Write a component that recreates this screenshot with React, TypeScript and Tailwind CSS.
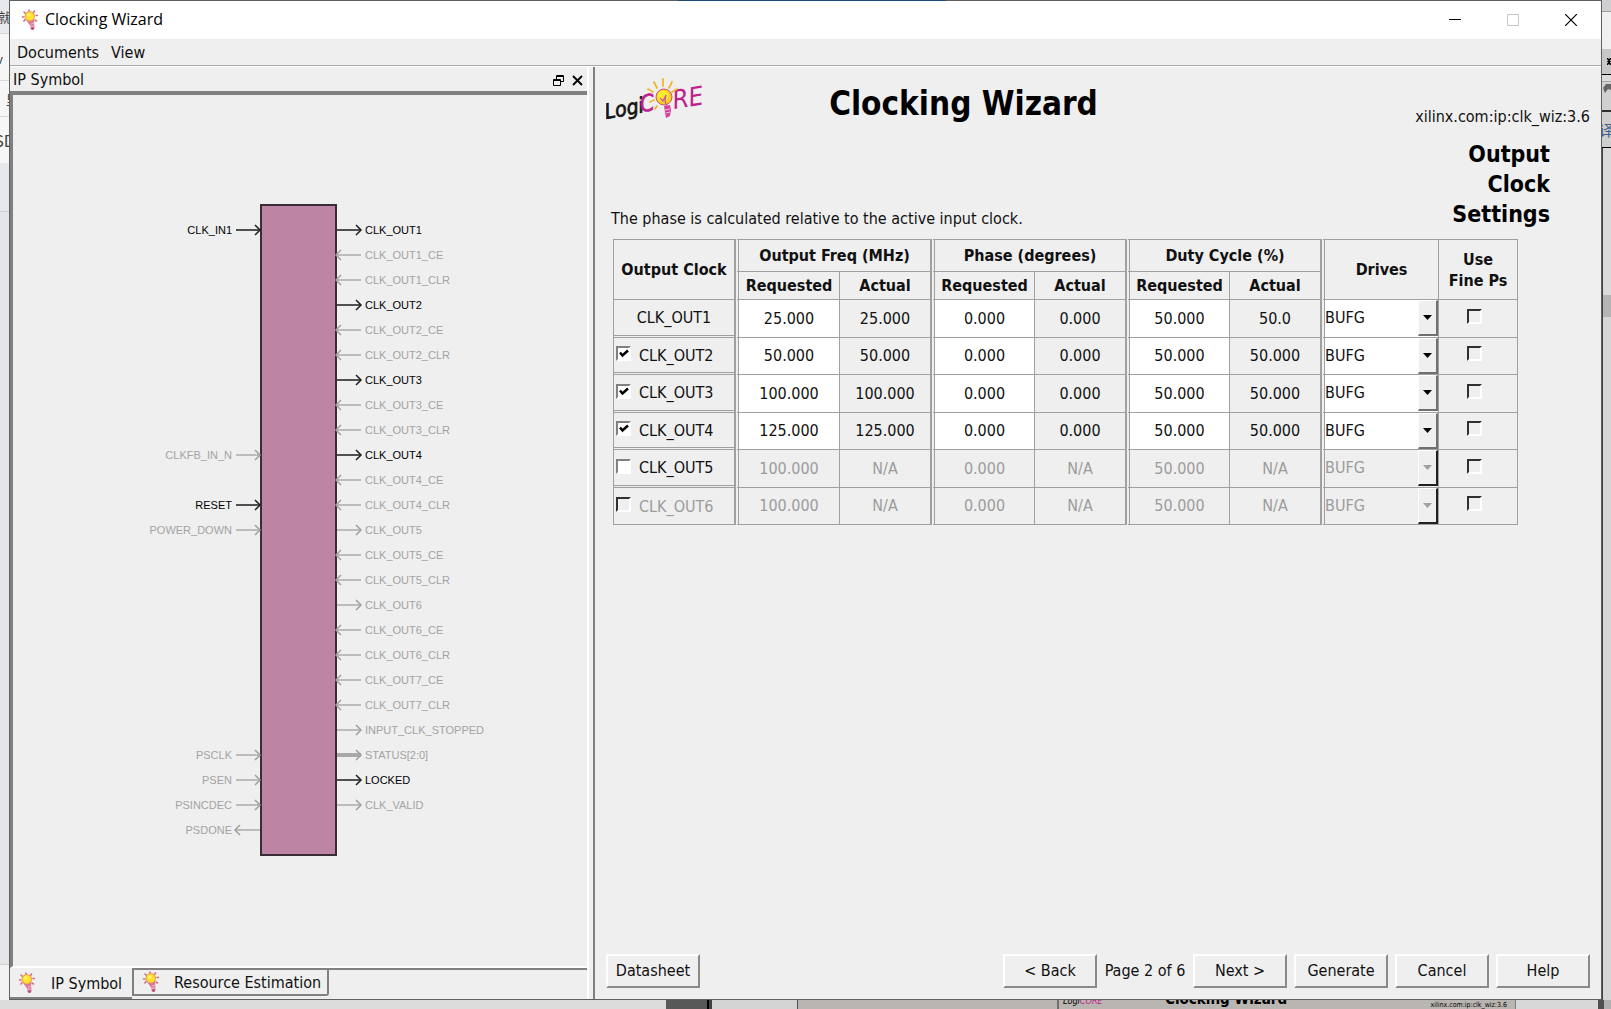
import { useState } from "react";
import clsx from "clsx";

interface ClockRow {
  name: string;
  state: "fixed" | "on" | "off" | "locked";
  freq: string;
  actualFreq: string;
  phase: string;
  actualPhase: string;
  duty: string;
  actualDuty: string;
}

const CLOCKS: ClockRow[] = [
  { name: "CLK_OUT1", state: "fixed", freq: "25.000", actualFreq: "25.000", phase: "0.000", actualPhase: "0.000", duty: "50.000", actualDuty: "50.0" },
  { name: "CLK_OUT2", state: "on", freq: "50.000", actualFreq: "50.000", phase: "0.000", actualPhase: "0.000", duty: "50.000", actualDuty: "50.000" },
  { name: "CLK_OUT3", state: "on", freq: "100.000", actualFreq: "100.000", phase: "0.000", actualPhase: "0.000", duty: "50.000", actualDuty: "50.000" },
  { name: "CLK_OUT4", state: "on", freq: "125.000", actualFreq: "125.000", phase: "0.000", actualPhase: "0.000", duty: "50.000", actualDuty: "50.000" },
  { name: "CLK_OUT5", state: "off", freq: "100.000", actualFreq: "N/A", phase: "0.000", actualPhase: "N/A", duty: "50.000", actualDuty: "N/A" },
  { name: "CLK_OUT6", state: "locked", freq: "100.000", actualFreq: "N/A", phase: "0.000", actualPhase: "N/A", duty: "50.000", actualDuty: "N/A" },
];

interface Port {
  name: string;
  row: number;
  dir: "in" | "out";
  active?: boolean;
  bus?: boolean;
}

const LEFT_PORTS: Port[] = [
  { name: "CLK_IN1", row: 0, dir: "in", active: true },
  { name: "CLKFB_IN_N", row: 9, dir: "in" },
  { name: "RESET", row: 11, dir: "in", active: true },
  { name: "POWER_DOWN", row: 12, dir: "in" },
  { name: "PSCLK", row: 21, dir: "in" },
  { name: "PSEN", row: 22, dir: "in" },
  { name: "PSINCDEC", row: 23, dir: "in" },
  { name: "PSDONE", row: 24, dir: "out" },
];

const RIGHT_PORTS: Port[] = [
  { name: "CLK_OUT1", row: 0, dir: "out", active: true },
  { name: "CLK_OUT1_CE", row: 1, dir: "in" },
  { name: "CLK_OUT1_CLR", row: 2, dir: "in" },
  { name: "CLK_OUT2", row: 3, dir: "out", active: true },
  { name: "CLK_OUT2_CE", row: 4, dir: "in" },
  { name: "CLK_OUT2_CLR", row: 5, dir: "in" },
  { name: "CLK_OUT3", row: 6, dir: "out", active: true },
  { name: "CLK_OUT3_CE", row: 7, dir: "in" },
  { name: "CLK_OUT3_CLR", row: 8, dir: "in" },
  { name: "CLK_OUT4", row: 9, dir: "out", active: true },
  { name: "CLK_OUT4_CE", row: 10, dir: "in" },
  { name: "CLK_OUT4_CLR", row: 11, dir: "in" },
  { name: "CLK_OUT5", row: 12, dir: "out" },
  { name: "CLK_OUT5_CE", row: 13, dir: "in" },
  { name: "CLK_OUT5_CLR", row: 14, dir: "in" },
  { name: "CLK_OUT6", row: 15, dir: "out" },
  { name: "CLK_OUT6_CE", row: 16, dir: "in" },
  { name: "CLK_OUT6_CLR", row: 17, dir: "in" },
  { name: "CLK_OUT7_CE", row: 18, dir: "in" },
  { name: "CLK_OUT7_CLR", row: 19, dir: "in" },
  { name: "INPUT_CLK_STOPPED", row: 20, dir: "out" },
  { name: "STATUS[2:0]", row: 21, dir: "out", bus: true },
  { name: "LOCKED", row: 22, dir: "out", active: true },
  { name: "CLK_VALID", row: 23, dir: "out" },
];

function BulbIcon() {
  return (
    <svg width="18" height="22" viewBox="0 0 18 22" className="shrink-0" aria-hidden="true">
      <g stroke="#d0708c" strokeWidth="1.6" strokeLinecap="round">
        <path d="M3 3l1.500 1.500M8 1v1.500M13.500 2l-1 1.500M1.500 8h1.500M15 6.500h1.500M3 12l1-1.500M14 11l1.500 1" />
      </g>
      <path d="M5 11L9.500 17 9.500 20 12.500 21 13.500 19 13 10z" fill="#d9799a" />
      <circle cx="8.800" cy="7.300" r="5.200" fill="#e8975a" />
      <circle cx="8.800" cy="7.200" r="4.300" fill="#ffe02e" />
      <circle cx="7.800" cy="6" r="1.800" fill="#fff36a" />
      <path d="M9.800 15.200l3.200-1M10 17.500l3.200-.8" stroke="#f0c0cf" strokeWidth="1" />
      <path d="M10 18.500l.3 2 1.700.5 1.300-2.500z" fill="#b5487f" />
    </svg>
  );
}

function LogiCoreLogo() {
  return (
    <svg width="102" height="46" viewBox="0 0 102 46" role="img" aria-label="LogiCORE" className="shrink-0">
      <g fontStyle="italic">
        <text x="0" y="42" fontSize="21" fill="#141414" stroke="#141414" strokeWidth=".7" transform="rotate(-10 0 42)" fontFamily="'DejaVu Sans Condensed', sans-serif">Logi</text>
        <text x="35" y="35" fontSize="23" fill="#c0208c" stroke="#c0208c" strokeWidth=".6" transform="rotate(-8 35 35)" fontFamily="'DejaVu Sans Condensed', sans-serif">C</text>
        <text x="68" y="32" fontSize="26" fill="#c0208c" transform="rotate(-9 68 32)" fontFamily="'DejaVu Sans Condensed', sans-serif">RE</text>
      </g>
      <g stroke="#f2b62e" strokeWidth="1.800" strokeLinecap="round">
        <path d="M57 2v7M48 5l3 6M66 5l-3 6M42 12l5 3M71 12l-5 3M44 25l4-2M49 32l2-3" />
      </g>
      <circle cx="58" cy="20" r="8" fill="#f7cf1d" stroke="#d0508c" strokeWidth="1" />
      <circle cx="57" cy="19" r="5.500" fill="#ffee30" />
      <path d="M54 21l3 3 3-6-1 6 2 6" fill="none" stroke="#d4569a" strokeWidth="1.300" />
      <path d="M58 29l6-1 1 5-1 6-4 2-1-6z" fill="#d4429a" />
      <path d="M59 33l5-1M60 36l4-1" stroke="#f0c3de" strokeWidth="1" />
    </svg>
  );
}

function PortArrow({ port, side }: { port: Port; side: "left" | "right" }) {
  const y = 26 + port.row * 25;
  const [x1, x2] = side === "left" ? [137, 161] : [238, 262];
  // "in" on the left and "out" on the right both point right
  const pointsRight = (side === "left") === (port.dir === "in");
  const tip = pointsRight ? x2 : side === "left" ? 136 : 237;
  const back = pointsRight ? tip - 5 : tip + 5;
  return (
    <g>
      <line x1={x1} x2={x2} y1={y} y2={y} stroke={port.active ? "#505050" : port.bus ? "#a8a8a8" : "#bcbcbc"} strokeWidth={port.bus ? 4 : 2} />
      <path d={`M${back} ${y - 5}L${tip} ${y}L${back} ${y + 5}`} fill="none" stroke={port.active ? "#202020" : "#a0a0a0"} strokeWidth="1.500" />
      <text x={side === "left" ? 133 : 266} y={y + 4} textAnchor={side === "left" ? "end" : "start"} fill={port.active ? "#000000" : "#a3a3a3"}>
        {port.name}
      </text>
    </g>
  );
}

function IpSymbol() {
  return (
    <svg width="400" height="652" viewBox="0 0 400 652" className="font-['Liberation_Sans',sans-serif] text-[11px]">
      <rect x="162" y="1" width="75" height="650" fill="#bd85a3" stroke="#3a2c34" strokeWidth="2" />
      {LEFT_PORTS.map((p) => <PortArrow key={p.name} port={p} side="left" />)}
      {RIGHT_PORTS.map((p) => <PortArrow key={p.name} port={p} side="right" />)}
    </svg>
  );
}

function DockPanel() {
  return (
    <section className="w-[579px] shrink-0 flex flex-col border-r-2 border-white mr-1">
      <div className="h-6 flex items-center justify-between pl-[3px] pr-1 pt-0.5">
        <h2>IP Symbol</h2>
        <div className="flex items-center gap-2">
          <button aria-label="Float" className="block">
            <svg width="11" height="11" viewBox="0 0 11 11" fill="none" stroke="#000">
              <path d="M3.500 4V.5h7v6H7.500M3.500 1.500h7" />
              <path d="M.5 4.500h7v6h-7zM.5 5.500h7" />
            </svg>
          </button>
          <button aria-label="Close panel" className="block">
            <svg width="11" height="11" viewBox="0 0 11 11" stroke="#000" strokeWidth="1.800"><path d="M1 1l9 9M10 1l-9 9" /></svg>
          </button>
        </div>
      </div>
      <div className="flex-1 min-h-0 flex items-center justify-center pr-0.5 pb-px border-t-4 border-l-[3px] border-t-[#808080] border-l-[#808080] border-b-2 border-b-white">
        <IpSymbol />
      </div>
      <div role="tablist" className="h-[31px] flex items-start">
        <button role="tab" aria-selected="true" className="w-[122px] h-[31px] flex items-center gap-[15px] pl-2 border-b-2 border-[#808080]">
          <BulbIcon />
          <span className="pt-0.5 whitespace-nowrap">IP Symbol</span>
        </button>
        <div className="flex-1 h-[31px] border-t-2 border-[#808080]">
          <button role="tab" aria-selected="false" className="w-[197px] h-[26px] flex items-center gap-3.5 pl-2 border-x-2 border-b-2 border-[#808080] rounded-br-[3px]">
            <BulbIcon />
            <span className="pt-0.5 whitespace-nowrap">Resource Estimation</span>
          </button>
        </div>
      </div>
    </section>
  );
}

function EnableBox({ row }: { row: ClockRow }) {
  const locked = row.state === "locked";
  return (
    <span className="grid mb-1">
      <input
        id={row.name}
        type="checkbox"
        defaultChecked={row.state === "on"}
        disabled={locked}
        className={clsx(
          "peer appearance-none col-start-1 row-start-1 w-[15px] h-[15px] border-2 border-r-white border-b-white",
          locked ? "border-t-[#303030] border-l-[#303030]" : "bg-white border-t-[#808080] border-l-[#808080]"
        )}
      />
      <svg width="15" height="15" viewBox="0 0 15 15" className="hidden peer-checked:block pointer-events-none col-start-1 row-start-1">
        <path d="M4 6.500l2.500 3L12 4.500" fill="none" stroke="#000" strokeWidth="2.500" />
      </svg>
    </span>
  );
}

const cell = "border-r border-b border-[#a0a0a0] bg-clip-padding p-0 text-center align-middle";
const valueCell = "border-r border-b border-[#a0a0a0] p-0 pt-px text-center align-middle";
const groupCell = "border-r border-b border-l-4 [border-left-style:double] border-[#a0a0a0] bg-clip-padding p-0 text-center align-middle";

function ValueInput({ label, value, off }: { label: string; value: string; off: boolean }) {
  return (
    <input
      type="text"
      aria-label={label}
      defaultValue={value}
      disabled={off}
      className={clsx("block w-full h-9 text-center outline-none", off ? "text-[#9c9c9c]" : "bg-white")}
    />
  );
}

function ClockTableRow({ row, last }: { row: ClockRow; last: boolean }) {
  const [drive, setDrive] = useState("BUFG");
  const off = row.state === "off" || row.state === "locked";
  const gray = off && "text-[#9c9c9c]";
  const editable = !off && "bg-white";
  return (
    <tr>
      <th scope="row" className={clsx("border-x border-[#a0a0a0] p-0 pt-0.5 font-normal", last ? "border-b" : "border-b-[3px] [border-bottom-style:double]")}>
        {row.state === "fixed" ? (
          row.name
        ) : (
          <div className="flex items-center gap-2 pl-0.5">
            <EnableBox row={row} />
            <label htmlFor={row.name} className={clsx(row.state === "locked" && "text-[#9c9c9c]")}>{row.name}</label>
          </div>
        )}
      </th>
      <td className={clsx(groupCell, editable)}><ValueInput label={`${row.name} requested frequency`} value={row.freq} off={off} /></td>
      <td className={clsx(valueCell, gray)}>{row.actualFreq}</td>
      <td className={clsx(groupCell, editable)}><ValueInput label={`${row.name} requested phase`} value={row.phase} off={off} /></td>
      <td className={clsx(valueCell, gray)}>{row.actualPhase}</td>
      <td className={clsx(groupCell, editable)}><ValueInput label={`${row.name} requested duty cycle`} value={row.duty} off={off} /></td>
      <td className={clsx(valueCell, gray)}>{row.actualDuty}</td>
      <td className={clsx(groupCell, editable)}>
        <div className="grid">
          <select
            aria-label={`${row.name} drives`}
            value={drive}
            onChange={(e) => setDrive(e.target.value)}
            disabled={off}
            className={clsx("appearance-none col-start-1 row-start-1 w-full h-9 outline-none opacity-100", off ? "text-[#9c9c9c]" : "bg-white")}
          >
            <option>BUFG</option>
            <option>BUFH</option>
          </select>
          <span
            className={clsx(
              "col-start-1 row-start-1 justify-self-end w-5 h-9 flex items-center justify-center pointer-events-none bg-[#efefef] border-t border-l border-t-white border-l-white border-r-2 border-b-2",
              off ? "border-r-[#202020] border-b-[#202020]" : "border-r-[#707070] border-b-[#707070]"
            )}
          >
            <svg width="9" height="5" viewBox="0 0 9 5"><path d="M0 0h9L4.500 5z" fill={off ? "#a0a0a0" : "#000"} /></svg>
          </span>
        </div>
      </td>
      <td className={cell}>
        <input
          type="checkbox"
          aria-label={`${row.name} use fine phase shift`}
          disabled
          className="appearance-none block ml-7 mb-1 w-[15px] h-[15px] border-2 border-t-[#303030] border-l-[#303030] border-r-white border-b-white"
        />
      </td>
    </tr>
  );
}

function ClockTable() {
  return (
    <table className="table-fixed w-[905px] h-[286px] border-separate border-spacing-0">
      <colgroup>
        <col className="w-[122px]" />
        <col className="w-[105px]" />
        <col className="w-[91px]" />
        <col className="w-[104px]" />
        <col className="w-[91px]" />
        <col className="w-[104px]" />
        <col className="w-[91px]" />
        <col className="w-[118px]" />
        <col className="w-[79px]" />
      </colgroup>
      <thead>
        <tr className="h-[33px]">
          <th rowSpan={2} className="border border-[#a0a0a0] p-0">Output Clock</th>
          <th colSpan={2} className={clsx(groupCell, "border-t")}>Output Freq (MHz)</th>
          <th colSpan={2} className={clsx(groupCell, "border-t")}>Phase (degrees)</th>
          <th colSpan={2} className={clsx(groupCell, "border-t")}>Duty Cycle (%)</th>
          <th rowSpan={2} className={clsx(groupCell, "border-t")}>Drives</th>
          <th rowSpan={2} className={clsx(cell, "border-t leading-[21px]")}>Use<br />Fine Ps</th>
        </tr>
        <tr className="h-7">
          <th className={groupCell}>Requested</th>
          <th className={cell}>Actual</th>
          <th className={groupCell}>Requested</th>
          <th className={cell}>Actual</th>
          <th className={groupCell}>Requested</th>
          <th className={cell}>Actual</th>
        </tr>
      </thead>
      <tbody>
        {CLOCKS.map((row, i) => <ClockTableRow key={row.name} row={row} last={i === CLOCKS.length - 1} />)}
      </tbody>
    </table>
  );
}

function DialogButton({ children }: { children: string }) {
  return (
    <button className="w-[94px] h-[34px] border-2 border-t-white border-l-white border-r-[#8a8a8a] border-b-[#8a8a8a] bg-[#efefef] whitespace-nowrap">
      {children}
    </button>
  );
}

function WizardPage() {
  return (
    <main className="flex-1 min-w-0 flex flex-col border-l-2 border-[#808080] pl-[11px] pr-[11px] pb-[11px]">
      <header className="h-[68px] flex items-start pt-2.5">
        <LogiCoreLogo />
        <h1 className="flex-1 text-center text-[33px] leading-[54px] font-bold text-black">Clocking Wizard</h1>
        <p className="w-[371px] pt-[30px] text-right">xilinx.com:ip:clk_wiz:3.6</p>
      </header>
      <div className="h-[102px] flex items-end justify-between pl-[5px] pr-10">
        <p className="pb-2">The phase is calculated relative to the active input clock.</p>
        <h2 className="w-[110px] text-right text-[23px] leading-[30px] font-bold pb-2 text-black">Output Clock Settings</h2>
      </div>
      <div className="flex-1 pl-[7px] pt-0.5">
        <ClockTable />
      </div>
      <footer className="flex items-center gap-[7px]">
        <DialogButton>Datasheet</DialogButton>
        <span className="flex-1" />
        <DialogButton>&lt; Back</DialogButton>
        <span className="w-[82px] text-center whitespace-nowrap">Page 2 of 6</span>
        <DialogButton>Next &gt;</DialogButton>
        <DialogButton>Generate</DialogButton>
        <DialogButton>Cancel</DialogButton>
        <DialogButton>Help</DialogButton>
      </footer>
    </main>
  );
}

function TitleBar() {
  return (
    <div className="h-[38px] bg-white flex items-center pl-[11px] pr-6 text-black">
      <BulbIcon />
      <span className="ml-1.5 pb-0.5 text-base font-['Open_Sans','Noto_Sans',sans-serif]">Clocking Wizard</span>
      <div className="ml-auto flex items-center gap-[46px]">
        <button aria-label="Minimize">
          <svg width="12" height="12" viewBox="0 0 12 12" className="block"><path d="M0 5.500h12" stroke="#000" /></svg>
        </button>
        <button aria-label="Maximize" disabled>
          <svg width="12" height="12" viewBox="0 0 12 12" className="block"><path d="M.5.5h11v11H.5z" fill="none" stroke="#c8c8c8" /></svg>
        </button>
        <button aria-label="Close">
          <svg width="12" height="12" viewBox="0 0 12 12" className="block"><path d="M0 0l12 12M12 0L0 12" stroke="#000" strokeWidth="1.200" /></svg>
        </button>
      </div>
    </div>
  );
}

// slivers of the windows that lie behind the dialog
function LeftSliver() {
  return (
    <div aria-hidden="true" className="w-[9px] shrink-0 flex flex-col overflow-hidden text-[13px] text-[#404040] font-['Noto_Sans_CJK_SC',sans-serif]">
      <div className="h-[34px] bg-[#e8e9ec] flex items-center justify-center border-b border-[#d4d5d8]">就</div>
      <div className="h-[47px] bg-[#f6f6f7] flex items-center justify-end pt-1 pr-1.5 border-b border-[#d8d8d8]">v</div>
      <div className="h-9 bg-[#f6f6f7] flex items-center border-b border-[#d8d8d8]"><span className="pl-1.5">里</span></div>
      <div className="h-[46px] bg-[#f6f6f7] flex items-center justify-center text-base">SD</div>
      <div className="h-[49px] bg-[#e6e7ea] border-b border-[#cfd0d3]" />
      <div className="flex-1 bg-[#e3e5e8]" />
      <div className="h-9 bg-[#f2f2f3] border-t border-[#d0d0d0]" />
    </div>
  );
}

function RightSliver() {
  return (
    <div aria-hidden="true" className="w-[9px] shrink-0 flex flex-col overflow-hidden text-[15px] text-[#3f5f8f] font-['Noto_Sans_CJK_SC',sans-serif]">
      <div className="h-3 bg-[#cfcfd1] border-b border-[#a0a0a0]" />
      <div className="h-[37px] bg-[#f0f0f0]" />
      <div className="h-[26px] bg-[#c8c8c8] border-b border-black flex items-center justify-end">
        <svg width="4" height="7" viewBox="0 0 4 7"><path d="M0 0l3 3.500L0 7M4 0L1 3.500 4 7" fill="none" stroke="#000" strokeWidth="1.500" /></svg>
      </div>
      <div className="h-[7px] bg-[#dcdcdc] border-b border-[#a8a8a8]" />
      <div className="h-[30px] bg-[#d0d0d0] border-b-2 border-[#303030]">
        <svg width="9" height="12" viewBox="0 0 9 12"><path d="M1 6l3-4h5v6l-3-1-3 4z" fill="#666" /></svg>
      </div>
      <div className="h-9 bg-[#cfcfcf] border-b border-black flex items-center justify-center">译</div>
      <div className="h-[147px] bg-[#dadada] border-l border-[#404040]" />
      <div className="h-[22px] bg-[#b4b4b4] border-l border-[#404040]" />
      <div className="flex-1 bg-[#d6d6d6] border-l border-[#404040]" />
    </div>
  );
}

function BottomSliver() {
  return (
    <div aria-hidden="true" className="h-[9px] shrink-0 flex overflow-hidden bg-[#d8d8d8] text-black">
      <div className="w-[666px] bg-[#dcdcdc]" />
      <div className="w-[41px] bg-[#585858]" />
      <div className="w-[5px] bg-[#404040] border-l-2 border-black" />
      <div className="w-[85px] bg-[#d4d4d4]" />
      <div className="flex-1 flex bg-[#b9b5b0] border-l border-[#505050]">
        <div className="w-[261px] border-r-2 border-[#707070]" />
        <div className="flex-1 flex items-end pl-1 pr-2 leading-[12px]">
          <span className="w-[102px] text-[9px] italic pb-0.5">Logi<span className="text-[#c0208c]">CORE</span></span>
          <span className="text-[15px] font-bold pb-1">Clocking Wizard</span>
          <span className="ml-auto text-[7px] leading-[8px]">xilinx.com:ip:clk_wiz:3.6</span>
        </div>
      </div>
      <div className="w-[83px] bg-[#d8d8d8] border-l border-[#808080]" />
      <div className="w-1.5 bg-[#505050]" />
      <div className="w-[7px] bg-[#b0b0b0]" />
    </div>
  );
}

export default function App() {
  return (
    <div className="h-screen flex flex-col overflow-hidden bg-[#e3e5e8] text-base leading-5 text-[#111] font-['DejaVu_Sans_Condensed','DejaVu_Sans',sans-serif]">
      <div className="flex-1 min-h-0 flex">
        <LeftSliver />
        <div className="flex-1 min-w-0 flex flex-col border-x border-b border-[#606060] bg-[#efefef]">
          <div className="h-px flex bg-[#606060]">
            <div className="w-[668px]" />
            <div className="w-[268px] bg-[#1b4a72]" />
          </div>
          <TitleBar />
          <nav className="h-[27px] flex items-center gap-3 px-[7px] pt-0.5 border-b border-[#a8a8a8]">
            <button>Documents</button>
            <button>View</button>
          </nav>
          <div className="flex-1 min-h-0 flex border-t border-white">
            <DockPanel />
            <WizardPage />
          </div>
        </div>
        <RightSliver />
      </div>
      <BottomSliver />
    </div>
  );
}
